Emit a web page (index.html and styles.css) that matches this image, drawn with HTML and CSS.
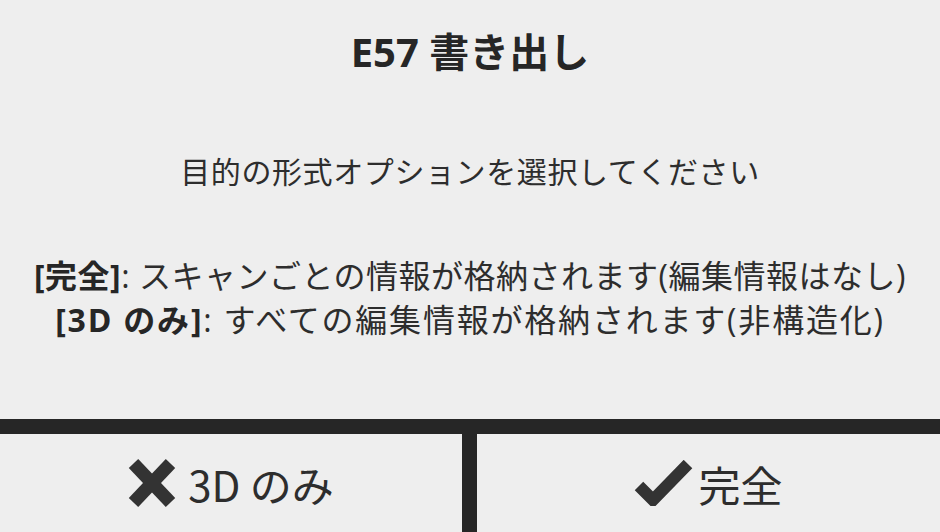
FILE: index.html
```html
<!DOCTYPE html>
<html lang="ja">
<head>
<meta charset="utf-8">
<link rel="stylesheet" href="styles.css">
</head>
<body>
<div class="dialog">
  <h1 class="title">E57 書き出し</h1>
  <p class="prompt">目的の形式オプションを選択してください</p>
  <div class="options">
    <p class="opt opt-full"><b>[完全]</b>: スキャンごとの情報が格納されます(編集情報はなし)</p>
    <p class="opt opt-3d"><b>[3D のみ]</b>: すべての編集情報が格納されます(非構造化)</p>
  </div>
  <div class="footer">
    <button class="btn btn-3d">
      <svg class="icon-x" viewBox="0 0 48 50" width="48" height="50" aria-hidden="true">
        <g stroke="#333" stroke-width="13" stroke-linecap="butt">
          <line x1="5.5" y1="5.5" x2="42.5" y2="44.5"/>
          <line x1="42.5" y1="5.5" x2="5.5" y2="44.5"/>
        </g>
      </svg>
      <span>3D のみ</span>
    </button>
    <div class="divider"></div>
    <button class="btn btn-full">
      <svg class="icon-check" viewBox="0 0 60 46" width="60" height="46" aria-hidden="true">
        <polyline points="5,26 19,40 54,4" fill="none" stroke="#333" stroke-width="12" stroke-linejoin="miter" stroke-linecap="butt"/>
      </svg>
      <span>完全</span>
    </button>
  </div>
</div>
</body>
</html>
```

FILE: styles.css
```css
html, body {
  margin: 0;
  padding: 0;
  background: #eeeeee;
}
body {
  font-family: "Open Sans", "Noto Sans CJK JP", sans-serif;
  color: #2d2d2d;
}
.dialog {
  width: 940px;
  height: 532px;
  display: flex;
  flex-direction: column;
  align-items: stretch;
  text-align: center;
}
.title {
  margin: 30px 0 0;
  font-size: 40px;
  line-height: 44px;
  font-weight: 700;
  color: #262626;
}
.prompt {
  margin: 74px 0 0;
  font-size: 30px;
  line-height: 44px;
  letter-spacing: 0.6px;
  font-family: "Noto Sans CJK JP", sans-serif;
}
.options {
  margin-top: 62px;
}
.opt {
  margin: 0;
  font-size: 32px;
  line-height: 44px;
  font-family: "Open Sans", "Noto Sans CJK JP", sans-serif;
}
.opt-full {
  letter-spacing: 0.5px;
}
.opt-3d {
  letter-spacing: 1.8px;
}
.opt b {
  font-weight: 700;
  color: #262626;
}
.footer {
  margin-top: auto;
  height: 98px;
  border-top: 15px solid #262626;
  display: grid;
  grid-template-columns: 462px 15px 1fr;
}
.divider {
  background: #262626;
}
.btn {
  border: 0;
  background: transparent;
  display: flex;
  align-items: center;
  justify-content: center;
  padding: 0;
  font-family: "Noto Sans CJK JP", sans-serif;
  font-size: 42px;
  color: #2d2d2d;
  cursor: pointer;
}
.btn-3d {
  gap: 12px;
}
.btn-full {
  gap: 4px;
}
.btn svg {
  display: block;
}
```
